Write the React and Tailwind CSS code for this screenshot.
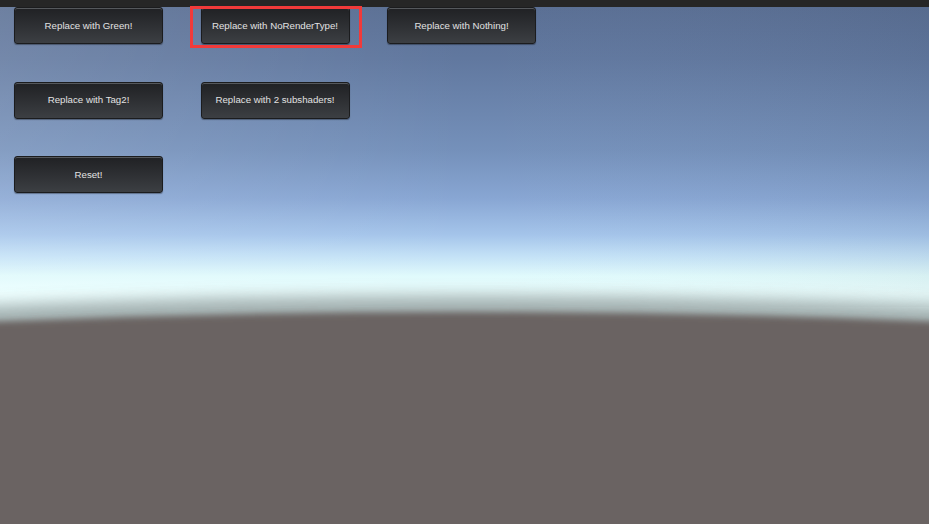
const rows = [
  ["Replace with Green!", "Replace with NoRenderType!", "Replace with Nothing!"],
  ["Replace with Tag2!", "Replace with 2 subshaders!"],
  ["Reset!"],
];

function SceneBackdrop() {
  return (
    <svg
      className="absolute inset-0 h-full w-full"
      viewBox="0 0 929 517"
      preserveAspectRatio="none"
    >
      <defs>
        <linearGradient id="sky" x1="0" y1="0" x2="0" y2="1">
          <stop offset="0" stopColor="#5a6f94" />
          <stop offset="0.1" stopColor="#61789f" />
          <stop offset="0.28" stopColor="#7591bb" />
          <stop offset="0.37" stopColor="#88a6d3" />
          <stop offset="0.44" stopColor="#a4c4ea" />
          <stop offset="0.48" stopColor="#c2e0f6" />
          <stop offset="0.52" stopColor="#e0fafc" />
          <stop offset="0.555" stopColor="#ebffff" />
          <stop offset="1" stopColor="#ebffff" />
        </linearGradient>
        <linearGradient id="side" x1="0" y1="0" x2="1" y2="0">
          <stop offset="0" stopColor="#ffffff" stopOpacity="0.12" />
          <stop offset="0.5" stopColor="#ffffff" stopOpacity="0" />
          <stop offset="1" stopColor="#000000" stopOpacity="0.04" />
        </linearGradient>
        <filter id="haze" x="-10%" y="-50%" width="120%" height="200%">
          <feGaussianBlur stdDeviation="8" />
        </filter>
        <filter id="edge" x="-10%" y="-50%" width="120%" height="200%">
          <feGaussianBlur stdDeviation="3" />
        </filter>
      </defs>
      <rect width="929" height="517" fill="url(#sky)" />
      <rect width="929" height="300" fill="url(#side)" />
      <path
        d="M-40 300 Q464 276 969 300 L969 560 L-40 560 Z"
        fill="#98a4a4"
        opacity="0.85"
        filter="url(#haze)"
      />
      <path
        d="M-40 316 Q464 294 969 316 L969 560 L-40 560 Z"
        fill="#6b6462"
        filter="url(#edge)"
      />
    </svg>
  );
}

function SceneButton({ label, marked }) {
  return (
    <div className="relative">
      <button className="flex h-[37px] w-[149px] items-center justify-center rounded-[3px] border border-[#1b1c1e] bg-gradient-to-b from-[#202124] to-[#3c3f43] pt-px text-[9.7px] text-[#e2e2e2] shadow-[inset_0_1px_0_#55585c,0_1px_1px_rgba(0,0,0,0.35)] [font-family:'Liberation_Sans',Arial,sans-serif]">
        {label}
      </button>
      {marked && (
        <span className="pointer-events-none absolute -top-[1px] -right-[12px] -bottom-[4px] -left-[11px] border-[3px] border-[#f13a3a]" />
      )}
    </div>
  );
}

export default function App() {
  return (
    <div className="flex h-[524px] w-[929px] flex-col overflow-hidden bg-[#262626]">
      <div className="h-[7px] shrink-0 bg-[#262626]" />
      <div className="relative flex-1">
        <SceneBackdrop />
        <div className="relative flex flex-col gap-[37.5px] pl-[14px]">
          {rows.map((row, i) => (
            <div key={i} className="flex gap-[37.5px]">
              {row.map((label) => (
                <SceneButton
                  key={label}
                  label={label}
                  marked={label === "Replace with NoRenderType!"}
                />
              ))}
            </div>
          ))}
        </div>
      </div>
    </div>
  );
}
